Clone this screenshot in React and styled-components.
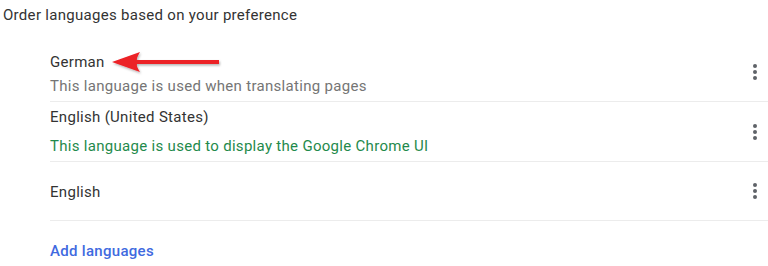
import React from "react";
import styled, { createGlobalStyle } from "styled-components";

const Global = createGlobalStyle`
  html, body { margin: 0; padding: 0; background: #fff; }
  body { font-family: Roboto, "Liberation Sans", Arial, sans-serif; color: #333; }
`;

const Page = styled.div`
  width: 768px;
  height: 266px;
  overflow: hidden;
  display: flex;
  flex-direction: column;
`;

const Title = styled.div`
  font-size: 15px;
  letter-spacing: 0.3px;
  line-height: 20px;
  color: #333;
  padding: 5px 0 0 3px;
  height: 36px;
  box-sizing: border-box;
`;

const List = styled.div`
  margin-left: 50px;
  display: flex;
  flex-direction: column;
`;

const Row = styled.div`
  height: ${(p) => p.$h}px;
  display: flex;
  align-items: center;
  justify-content: space-between;
  border-bottom: 1px solid #ececec;
  position: relative;
`;

const Texts = styled.div`
  display: flex;
  flex-direction: column;
  gap: ${(p) => p.$gap || 0}px;
  padding-top: ${(p) => p.$pt || 0}px;
  padding-bottom: ${(p) => p.$pb || 0}px;
`;

const Name = styled.div`
  font-size: 15px;
  letter-spacing: 0.3px;
  line-height: 18px;
  color: #333;
`;

const Note = styled.div`
  font-size: 15px;
  letter-spacing: 0.3px;
  line-height: 18px;
  color: ${(p) => (p.$green ? "#1f8a4c" : "#757575")};
`;

const MenuButton = styled.button`
  width: 24px;
  height: 24px;
  margin-right: 1px;
  border: 0;
  background: none;
  padding: 0;
  display: flex;
  flex-direction: column;
  align-items: center;
  justify-content: center;
  gap: 2px;
  transform: translateY(${(p) => p.$dy || 0}px);
`;

const Dot = styled.span`
  width: 4px;
  height: 4px;
  border-radius: 50%;
  background: #5f6368;
`;

const AddLink = styled.a`
  margin: 21px 0 0 50px;
  font-size: 15px;
  letter-spacing: 0.3px;
  line-height: 18px;
  font-weight: 500;
  color: #3f6ae0;
  text-decoration: none;
  align-self: flex-start;
`;

const Arrow = styled.svg`
  position: absolute;
  left: 60px;
  top: 15px;
  overflow: visible;
`;

const Kebab = ({ dy }) => (
  <MenuButton $dy={dy} aria-label="More actions">
    <Dot />
    <Dot />
    <Dot />
  </MenuButton>
);

export default function App() {
  return (
    <Page>
      <Global />
      <Title>Order languages based on your preference</Title>
      <List>
        <Row $h={65}>
          <Texts $gap={6} $pt={10}>
            <Name>German</Name>
            <Note>This language is used when translating pages</Note>
          </Texts>
          <Kebab dy={3} />
          <Arrow width="112" height="24" viewBox="0 0 112 24">
            <defs>
              <filter id="sh" x="-10%" y="-50%" width="130%" height="200%">
                <feDropShadow dx="1" dy="1.5" stdDeviation="1.2" floodColor="#000" floodOpacity="0.3" />
              </filter>
            </defs>
            <path
              d="M2 11 L30 1 Q26 8 27 9 L109 9 L109 13 L27 13 Q26 15 30 21 Z"
              fill="#ec2027"
              filter="url(#sh)"
            />
          </Arrow>
        </Row>
        <Row $h={59}>
          <Texts $gap={11}>
            <Name>English (United States)</Name>
            <Note $green>This language is used to display the Google Chrome UI</Note>
          </Texts>
          <Kebab />
        </Row>
        <Row $h={58}>
          <Texts $pt={2}>
            <Name>English</Name>
          </Texts>
          <Kebab />
        </Row>
      </List>
      <AddLink href="#">Add languages</AddLink>
    </Page>
  );
}
